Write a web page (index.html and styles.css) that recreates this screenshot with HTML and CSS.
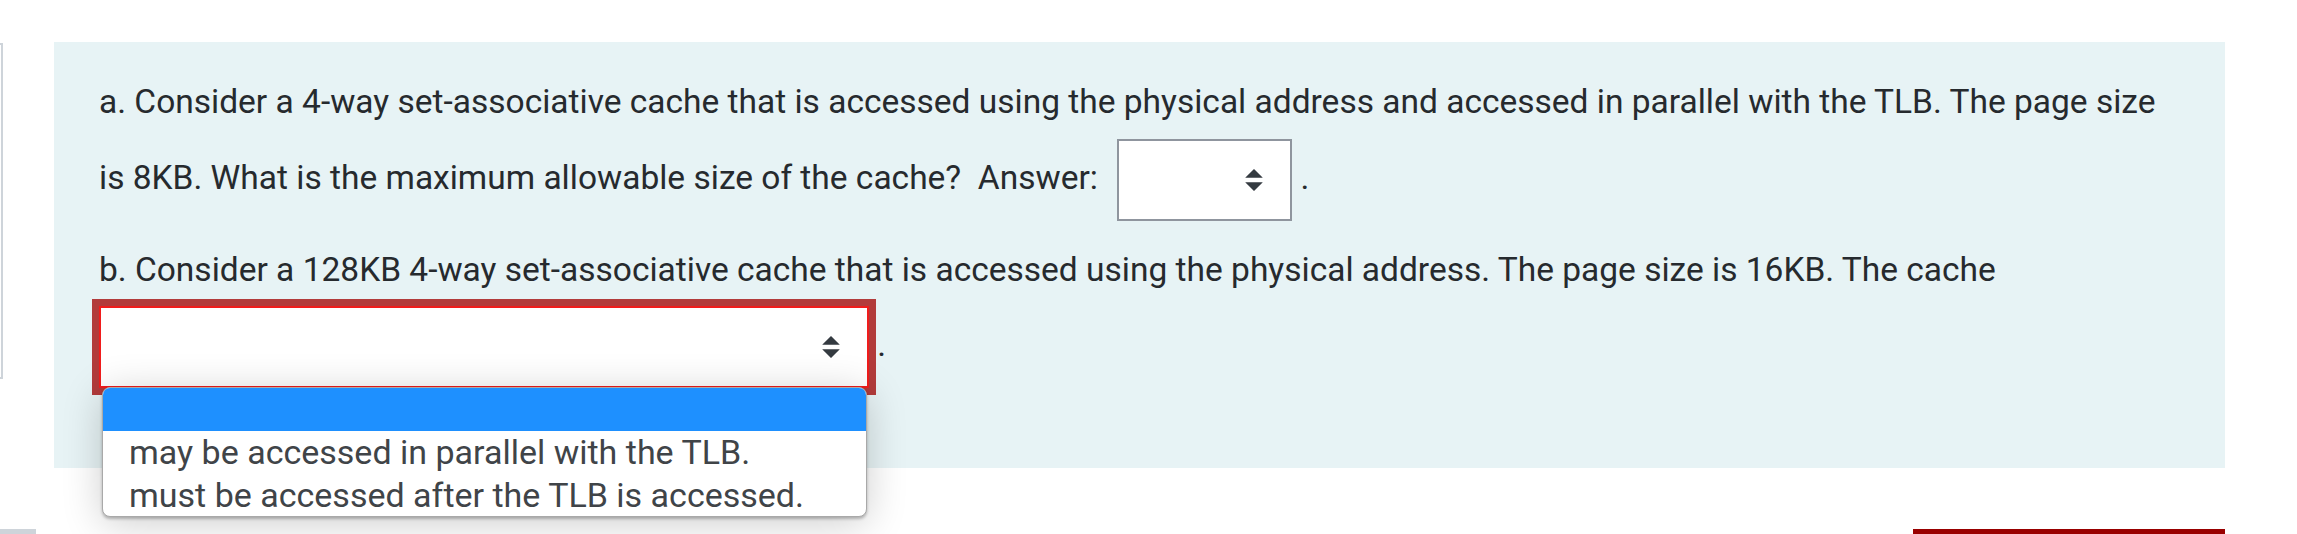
FILE: index.html
```html
<!DOCTYPE html>
<html lang="en">
<head>
    <meta charset="UTF-8">
    <meta name="viewport" content="width=device-width, initial-scale=1.0">
    <title>Question</title>
    <link rel="stylesheet" href="styles.css">
</head>
<body>

    <div class="page">
        <div class="question-row">
            <div class="info-box"></div>

            <div class="content">
                <div class="formulation">
                    <p class="part">a. Consider a 4-way set-associative cache that is accessed using the physical address and accessed in parallel with the TLB. The page size is 8KB. What is the maximum allowable size of the cache?&nbsp; Answer:
                        <span class="select select-small">
                            <svg class="arrows" viewBox="0 0 4 5"><path d="M2 0L0 2h4zm0 5L0 3h4z"/></svg>
                        </span> .
                    </p>
                    <p class="part">b. Consider a 128KB 4-way set-associative cache that is accessed using the physical address. The page size is 16KB. The cache
                        <span class="select select-wide is-invalid">
                            <svg class="arrows" viewBox="0 0 4 5"><path d="M2 0L0 2h4zm0 5L0 3h4z"/></svg>
                            <!-- открытый список вариантов -->
                            <span class="dropdown">
                                <span class="option active"></span>
                                <span class="option">may be accessed in parallel with the TLB.</span>
                                <span class="option">must be accessed after the TLB is accessed.</span>
                            </span>
                        </span> .
                    </p>
                </div>
            </div>
        </div>

        <div class="nav-buttons">
            <span class="btn btn-secondary"></span>
            <span class="btn btn-primary"></span>
        </div>
    </div>

</body>
</html>
```

FILE: styles.css
```css
* {
    margin: 0;
    padding: 0;
    box-sizing: border-box;
}

body {
    font-family: Roboto, "Liberation Sans", sans-serif;
    background: #fff;
    color: #262a2e;
    overflow: hidden;
}

.page {
    padding-top: 42px;
}

.question-row {
    display: flex;
    align-items: flex-start;
}

/* край блока с информацией о вопросе */
.info-box {
    width: 3px;
    height: 336px;
    margin-top: 1px;
    border: 2px solid #ced4da;
    border-left: none;
}

.content {
    margin-left: 51px;
    width: 2171px;
}

.formulation {
    background: #e7f3f5;
    color: #262a2e;
    padding: 35px 45px 33px;
    font-size: 33.5px;
    line-height: 1.51;
}

.part {
    margin: 0;
}

.part + .part {
    margin-top: 13px;
}

.part:last-child {
    margin-bottom: 36px;
}

/* поля выбора */
.select {
    display: inline-flex;
    align-items: center;
    justify-content: flex-end;
    vertical-align: middle;
    height: 82px;
    margin: 11px 0 11px 11px;
    padding-right: 27px;
    background: #fff;
    border: 2px solid #8f959e;
    position: relative;
}

.select-small {
    width: 175px;
}

.select-wide {
    width: 770px;
    margin-left: 0;
}

.select.is-invalid {
    border-color: #f01c1c;
    box-shadow: 0 0 0 7px #b23b3b;
}

.arrows {
    width: 18px;
    height: 22px;
    fill: #343a40;
}

.dropdown {
    position: absolute;
    top: calc(100% + 1px);
    left: 1px;
    width: 765px;
    height: 130px;
    background: #fff;
    border: 1px solid #a9a9a9;
    border-radius: 8px;
    overflow: hidden;
    display: flex;
    flex-direction: column;
    box-shadow: 0 2px 3px rgba(0, 0, 0, 0.25), 0 6px 40px rgba(0, 0, 0, 0.2);
    z-index: 2;
}

.option {
    display: block;
    flex: none;
    height: 43px;
    line-height: 43px;
    padding-left: 26px;
    font-size: 34px;
    color: #404448;
    white-space: nowrap;
}

.option.active {
    background: #1e90ff;
}

/* кнопки навигации внизу */
.nav-buttons {
    display: flex;
    justify-content: space-between;
    width: 2225px;
    margin-top: 61px;
}

.btn {
    display: block;
    height: 80px;
}

.btn-secondary {
    width: 36px;
    background: #ced4da;
}

.btn-primary {
    width: 312px;
    background: #990000;
}
```
